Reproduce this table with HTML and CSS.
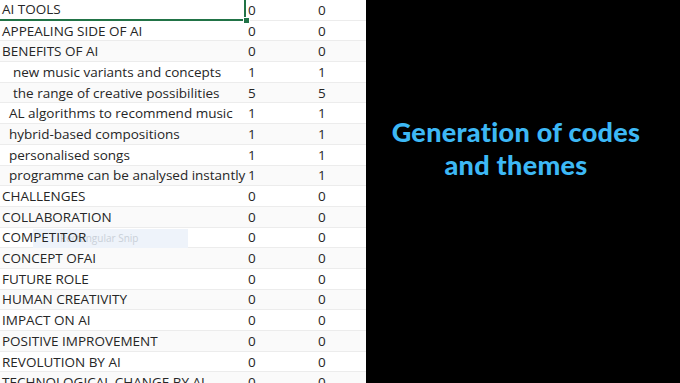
FILE: index.html
```html
<!DOCTYPE html>
<html>
<head>
<meta charset="utf-8">
<link rel="stylesheet" href="styles.css">
</head>
<body>
<div class="page">
  <div class="sheet">
    <div class="row sel"><span class="a">AI TOOLS</span><span class="b">0</span><span class="c">0</span><i class="handle"></i></div>
    <div class="row"><span class="a">APPEALING SIDE OF AI</span><span class="b">0</span><span class="c">0</span></div>
    <div class="row"><span class="a">BENEFITS OF AI</span><span class="b">0</span><span class="c">0</span></div>
    <div class="row"><span class="a ind2">new music variants and concepts</span><span class="b">1</span><span class="c">1</span></div>
    <div class="row"><span class="a ind2">the range of creative possibilities</span><span class="b">5</span><span class="c">5</span></div>
    <div class="row"><span class="a ind1">AL algorithms to recommend music</span><span class="b">1</span><span class="c">1</span></div>
    <div class="row"><span class="a ind1">hybrid-based compositions</span><span class="b">1</span><span class="c">1</span></div>
    <div class="row"><span class="a ind1">personalised songs</span><span class="b">1</span><span class="c">1</span></div>
    <div class="row"><span class="a ind1">programme can be analysed instantly</span><span class="b">1</span><span class="c">1</span></div>
    <div class="row"><span class="a">CHALLENGES</span><span class="b">0</span><span class="c">0</span></div>
    <div class="row"><span class="a">COLLABORATION</span><span class="b">0</span><span class="c">0</span></div>
    <div class="row snip-row"><div class="snip">Rectangular Snip</div><span class="a">COMPETITOR</span><span class="b">0</span><span class="c">0</span></div>
    <div class="row"><span class="a">CONCEPT OFAI</span><span class="b">0</span><span class="c">0</span></div>
    <div class="row"><span class="a">FUTURE ROLE</span><span class="b">0</span><span class="c">0</span></div>
    <div class="row"><span class="a">HUMAN CREATIVITY</span><span class="b">0</span><span class="c">0</span></div>
    <div class="row"><span class="a">IMPACT ON AI</span><span class="b">0</span><span class="c">0</span></div>
    <div class="row"><span class="a">POSITIVE IMPROVEMENT</span><span class="b">0</span><span class="c">0</span></div>
    <div class="row"><span class="a">REVOLUTION BY AI</span><span class="b">0</span><span class="c">0</span></div>
    <div class="row"><span class="a">TECHNOLOGICAL CHANGE BY AI</span><span class="b">0</span><span class="c">0</span></div>
  </div>
  <div class="panel">
    <h1 class="title">Generation of codes<br>and themes</h1>
  </div>
</div>
</body>
</html>
```
FILE: styles.css
```css
html, body {
  margin: 0;
  padding: 0;
  width: 680px;
  height: 383px;
  overflow: hidden;
}
.page {
  display: flex;
  width: 680px;
  height: 383px;
}
.sheet {
  width: 366px;
  flex: none;
  background: #fff;
  font-family: "Open Sans", "Noto Sans", sans-serif;
  font-size: 13.5px;
  color: #262626;
  overflow: hidden;
}
.row {
  position: relative;
  display: flex;
  align-items: center;
  height: 20.7px;
  box-sizing: border-box;
  border-bottom: 1px solid #ececec;
  white-space: nowrap;
}
.row:nth-child(odd) {
  background: #fafafa;
}
.a {
  width: 246px;
  flex: none;
  padding-left: 2px;
  box-sizing: border-box;
  position: relative;
}
.ind1 { padding-left: 9px; }
.ind2 { padding-left: 13px; }
.b {
  width: 70px;
  flex: none;
  padding-left: 2px;
}
.c {
  flex: none;
}
.sel {
  background: #fff !important;
}
.sel .a {
  align-self: stretch;
  display: flex;
  align-items: center;
  border-bottom: 2px solid #217346;
  border-right: 2px solid #217346;
  margin-bottom: -1px;
}
.handle {
  position: absolute;
  left: 243px;
  top: 17px;
  width: 5px;
  height: 5px;
  background: #217346;
  border: 1px solid #fff;
  z-index: 2;
}
.snip {
  position: absolute;
  left: 33px;
  top: 1px;
  width: 155px;
  height: 19px;
  background: #eef3fa;
  color: #c9d0d8;
  font-size: 10px;
  line-height: 19px;
  padding-left: 27px;
  box-sizing: border-box;
}
.panel {
  flex: 1;
  background: #000;
  display: flex;
  align-items: center;
  justify-content: center;
}
.title {
  margin: 0 14px 88px 0;
  font-family: "Lato", sans-serif;
  font-weight: 900;
  font-size: 27px;
  letter-spacing: 0.3px;
  line-height: 33px;
  color: #3db8f5;
  text-align: center;
}
```
